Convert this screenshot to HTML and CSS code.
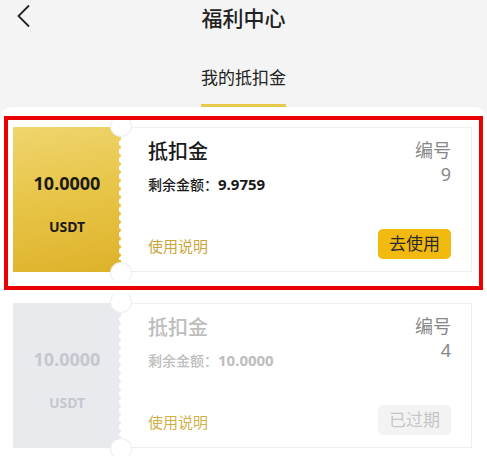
FILE: index.html
```html
<!DOCTYPE html>
<html lang="zh">
<head>
    <meta charset="UTF-8">
    <meta name="viewport" content="width=device-width, initial-scale=1.0">
    <title>福利中心</title>
    <link rel="stylesheet" href="styles.css">
</head>
<body>
    <!-- 顶部导航 -->
    <div class="top-bar">
        <div class="back">
            <svg width="14" height="24" viewBox="0 0 14 24"><polyline points="12,1.5 1.5,12 12,22.5" fill="none" stroke="#222" stroke-width="1.8" stroke-linejoin="miter"/></svg>
        </div>
        <div class="top-title">福利中心</div>
    </div>

    <div class="tabs">
        <div class="tab active">我的抵扣金</div>
    </div>

    <div class="panel">
        <div class="highlight">
            <div class="coupon">
                <div class="stub">
                    <div class="stub-amount">10.0000</div>
                    <div class="stub-unit">USDT</div>
                </div>
                <div class="coupon-body">
                    <div class="col-left">
                        <div class="coupon-name">抵扣金</div>
                        <div class="coupon-rest">剩余金额：<b>9.9759</b></div>
                        <div class="coupon-help">使用说明</div>
                    </div>
                    <div class="col-right">
                        <div class="coupon-no">编号</div>
                        <div class="coupon-no">9</div>
                        <div class="btn btn-use">去使用</div>
                    </div>
                </div>
                <span class="notch notch-top"></span>
                <span class="notch notch-bottom"></span>
            </div>
        </div>

        <div class="coupon expired">
            <div class="stub">
                <div class="stub-amount">10.0000</div>
                <div class="stub-unit">USDT</div>
            </div>
            <div class="coupon-body">
                <div class="col-left">
                    <div class="coupon-name">抵扣金</div>
                    <div class="coupon-rest">剩余金额：<b>10.0000</b></div>
                    <div class="coupon-help">使用说明</div>
                </div>
                <div class="col-right">
                    <div class="coupon-no">编号</div>
                    <div class="coupon-no">4</div>
                    <div class="btn btn-off">已过期</div>
                </div>
            </div>
            <span class="notch notch-top"></span>
            <span class="notch notch-bottom"></span>
        </div>
    </div>
</body>
</html>
```

FILE: styles.css
```css
body {
    margin: 0;
    background-color: #f4f4f4;
    font-family: "Noto Sans", "Noto Sans CJK SC", sans-serif;
    color: #222;
    overflow: hidden;
}
.top-bar {
    position: relative;
    height: 38px;
    display: flex;
    align-items: center;
    justify-content: center;
}
.back {
    position: absolute;
    left: 17px;
    top: 4px;
    width: 14px;
    height: 24px;
}
.back svg {
    display: block;
}
.top-title {
    font-size: 21px;
    font-weight: 500;
    line-height: 28px;
    margin-top: -2px;
    color: #222;
}
.tabs {
    display: flex;
    justify-content: center;
    height: 69px;
}
.tab {
    font-size: 17px;
    line-height: 24px;
    padding-top: 28px;
    height: 38px;
    width: 85px;
    text-align: center;
    border-bottom: 3px solid #e9c94c;
    color: #222;
}
.panel {
    background-color: #fff;
    border-radius: 12px 12px 0 0;
    padding: 20px 15px 0 13px;
    height: 338px;
}
.highlight {
    position: relative;
    margin-bottom: 31px;
}
.highlight::after {
    content: "";
    position: absolute;
    top: -11px;
    left: -9px;
    right: -11px;
    bottom: -18px;
    border: 4px solid #eb0000;
    pointer-events: none;
}
.coupon {
    position: relative;
    display: flex;
    height: 145px;
}
.stub {
    position: relative;
    width: 108px;
    flex-shrink: 0;
    display: flex;
    flex-direction: column;
    align-items: center;
    justify-content: center;
    padding-top: 7px;
    box-sizing: border-box;
    background: linear-gradient(170deg, #f0d56e 0%, #e7c446 50%, #deb22a 100%);
    color: #1a1a1a;
}
.stub::after {
    content: "";
    position: absolute;
    top: 12px;
    bottom: 12px;
    right: -1px;
    width: 6px;
    background: radial-gradient(circle at 100% 50%, #fff 3px, transparent 3.6px);
    background-size: 6px 8.3px;
    background-repeat: repeat-y;
}
.stub-amount {
    font-size: 18px;
    font-weight: bold;
    line-height: 24px;
}
.stub-unit {
    font-size: 14px;
    font-weight: bold;
    line-height: 18px;
    margin-top: 23px;
}
.coupon-body {
    flex: 1;
    display: flex;
    justify-content: space-between;
    border: 1px solid #eeeeee;
    border-left: none;
    background-color: #fff;
}
.col-left {
    display: flex;
    flex-direction: column;
    padding: 10px 0 15px 27px;
}
.coupon-name {
    font-size: 20px;
    font-weight: 500;
    line-height: 28px;
    color: #1a1a1a;
}
.coupon-rest {
    font-size: 14px;
    font-weight: 500;
    line-height: 20px;
    margin-top: 8px;
    color: #1a1a1a;
}
.coupon-rest b {
    font-size: 15px;
    font-weight: bold;
}
.coupon-help {
    margin-top: auto;
    font-size: 15px;
    line-height: 20px;
    color: #c9a53c;
}
.col-right {
    display: flex;
    flex-direction: column;
    align-items: flex-end;
    padding: 10px 20px 12px 0;
}
.coupon-no {
    font-size: 18px;
    line-height: 24px;
    color: #888;
}
.btn {
    margin-top: auto;
    height: 30px;
    line-height: 30px;
    padding: 0 11px;
    border-radius: 5px;
    font-size: 17px;
}
.btn-use {
    background-color: #f2b90f;
    color: #2a2a2a;
}
.btn-off {
    background-color: #f3f3f3;
    color: #c6c6c6;
}
.notch {
    position: absolute;
    left: 97px;
    width: 22px;
    height: 22px;
    border-radius: 50%;
    background-color: #fff;
    box-sizing: border-box;
}
.notch-top {
    top: -12px;
    border: 1px solid #eee;
    border-top-color: #fff;
}
.notch-bottom {
    bottom: -12px;
    border: 1px solid #eee;
    border-bottom-color: #fff;
}

/* 已过期 */
.expired .stub {
    background: #e9eaee;
    color: #c4c7cf;
}
.expired .coupon-name,
.expired .coupon-rest {
    color: #bdbdbd;
}
.expired .coupon-help {
    color: #d1b048;
}
```
